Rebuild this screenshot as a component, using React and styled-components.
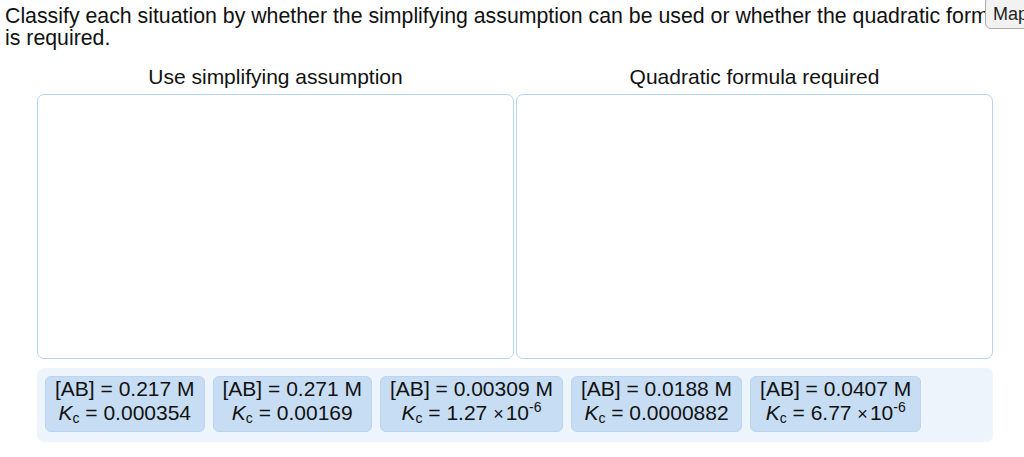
import React from "react";
import styled, { createGlobalStyle } from "styled-components";

const GlobalStyle = createGlobalStyle`
  html, body {
    margin: 0;
    padding: 0;
    background: #fff;
    overflow: hidden;
  }
  body {
    font-family: "Liberation Sans", Arial, Helvetica, sans-serif;
    color: #111;
  }
`;

const Page = styled.div`
  position: relative;
  width: 1024px;
  height: 457px;
  overflow: hidden;
`;

const Prompt = styled.p`
  margin: 0;
  padding: 5px 0 0 5px;
  width: 1022px;
  font-size: 21.3px;
  line-height: 22px;
`;

const MapButton = styled.button`
  position: absolute;
  top: -4px;
  left: 985px;
  width: 60px;
  height: 33px;
  padding: 3px 0 0 7px;
  text-align: left;
  font-family: "Liberation Sans", Arial, sans-serif;
  font-size: 18px;
  color: #222;
  background: #f2f2f2;
  border: 1px solid #a9a9a9;
  border-radius: 6px;
`;

const Board = styled.div`
  margin: 17px 0 0 37px;
  width: 956px;
`;

const Columns = styled.div`
  display: grid;
  grid-template-columns: 1fr 1fr;
  column-gap: 2px;
`;

const Column = styled.div`
  display: flex;
  flex-direction: column;
`;

const Heading = styled.div`
  text-align: center;
  font-size: 21px;
  line-height: 22px;
  height: 22px;
  margin-bottom: 6px;
`;

const DropZone = styled.div`
  height: 263px;
  border: 1px solid #b6d3f1;
  border-radius: 7px;
  background: #fff;
`;

const Tray = styled.div`
  margin-top: 9px;
  height: 74px;
  padding: 8px 8px;
  box-sizing: border-box;
  display: flex;
  align-items: flex-start;
  gap: 8px;
  background: #eef4fb;
  border-radius: 7px;
`;

const Card = styled.div`
  height: 56px;
  padding: 0 9px;
  min-width: ${(p) => p.$min || 0}px;
  box-sizing: border-box;
  text-align: center;
  font-size: 21px;
  line-height: 24px;
  background: #c7ddf3;
  border: 1px solid #bcd4ee;
  border-radius: 6px;
  white-space: nowrap;
`;

const K = styled.i`
  font-style: italic;
`;

const Sub = styled.sub`
  font-size: 14px;
  vertical-align: -3px;
  line-height: 0;
`;

const Sup = styled.sup`
  font-size: 14px;
  vertical-align: 8px;
  line-height: 0;
`;

const Times = styled.span`
  font-size: 18px;
  margin-right: 2px;
`;

const cards = [
  { ab: "0.217", kc: "0.000354" },
  { ab: "0.271", kc: "0.00169" },
  { ab: "0.00309", kc: "1.27", exp: "-6" },
  { ab: "0.0188", kc: "0.0000882" },
  { ab: "0.0407", kc: "6.77", exp: "-6", min: 170 },
];

const KcValue = ({ kc, exp }) =>
  exp ? (
    <>
      {kc} <Times>×</Times>10<Sup>{exp}</Sup>
    </>
  ) : (
    kc
  );

const App = () => {
  return (
    <Page>
      <GlobalStyle />
      <Prompt>
        Classify each situation by whether the simplifying assumption can be used or
        whether the quadratic formula is required.
      </Prompt>
      <MapButton>Map</MapButton>
      <Board>
        <Columns>
          <Column>
            <Heading>Use simplifying assumption</Heading>
            <DropZone />
          </Column>
          <Column>
            <Heading>Quadratic formula required</Heading>
            <DropZone />
          </Column>
        </Columns>
        <Tray>
          {cards.map((c) => (
            <Card key={c.ab} $min={c.min}>
              [AB] = {c.ab} M
              <br />
              <K>K</K>
              <Sub>c</Sub> = <KcValue kc={c.kc} exp={c.exp} />
            </Card>
          ))}
        </Tray>
      </Board>
    </Page>
  );
};

export default App;
